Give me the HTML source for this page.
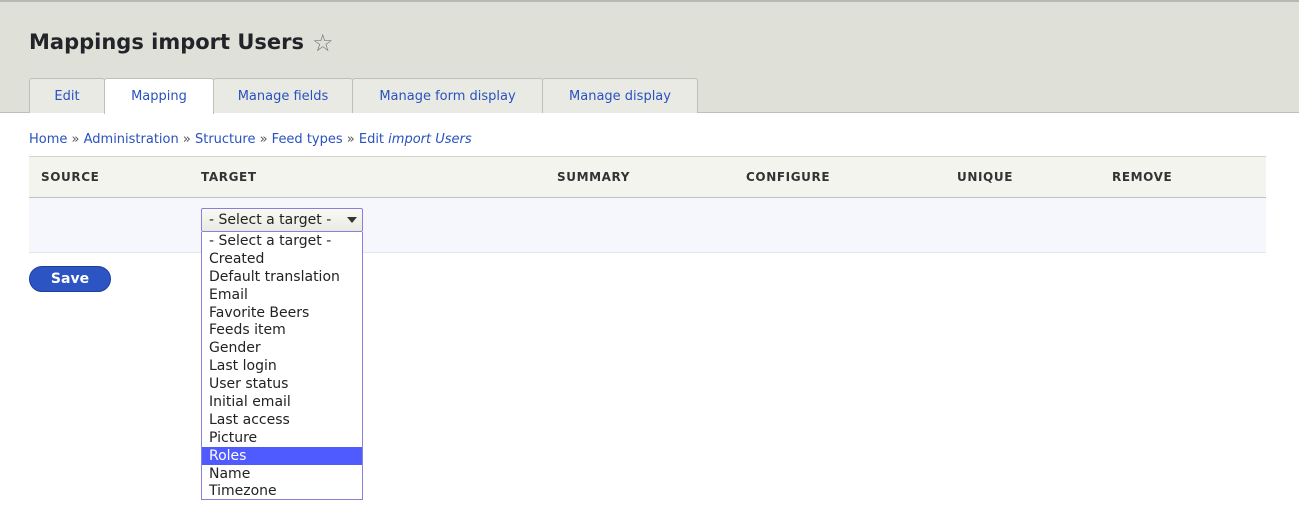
<!DOCTYPE html>
<html><head><style>
body{margin:0;width:1299px;height:511px;overflow:hidden;background:#fff;font-family:"DejaVu Sans","Liberation Sans",sans-serif;color:#222330;position:relative}
.hdr{position:absolute;left:0;top:0;width:1299px;height:113px;background:#dfe1d8;border-top:2px solid #b8b9b3;box-sizing:border-box;border-bottom:1px solid #bfc0ba}
h1{position:absolute;left:29px;top:30px;margin:0;font-size:21px;font-weight:bold;color:#232429}
.star{position:absolute;left:312px;top:29px;font-size:24px;color:#777}
.tab{position:absolute;top:78px;height:35px;box-sizing:border-box;border:1px solid #bfc0ba;border-bottom:none;background:#e9eae4;color:#2a52be;font-size:13px;text-align:center;line-height:35px;border-radius:3px 3px 0 0}
.tab.a{background:#fff;height:36px}
a{color:#2a52be;text-decoration:none}
.bc{position:absolute;left:29px;top:132px;font-size:13px;color:#555}
.th{position:absolute;left:29px;top:156px;width:1237px;height:42px;background:#f3f4ee;border-top:1px solid #d4d4d0;border-bottom:1px solid #c0c1bd;box-sizing:border-box}
.th span{position:absolute;top:13px;font-size:12px;font-weight:bold;letter-spacing:.6px;color:#333}
.row{position:absolute;left:29px;top:198px;width:1237px;height:55px;background:#f5f7fd;border-bottom:1px solid #e5e5e3;box-sizing:border-box}
.sel{position:absolute;left:201px;top:208px;width:162px;height:24px;box-sizing:border-box;border:1px solid #8a7fdb;border-radius:2px;background:linear-gradient(#fafaf6,#e9eadf);font-size:14px;line-height:23px;padding-left:7px;color:#222}
.sel i{position:absolute;right:5px;top:8px;border:5px solid transparent;border-top:6px solid #333;border-bottom:none}
.list{position:absolute;left:201px;top:232px;width:162px;height:268px;box-sizing:border-box;border:1px solid #8a7fdb;border-top:none;background:#fff;font-size:14px;padding-top:0}
.list div{height:17.9px;line-height:19px;padding-left:7px;color:#222}
.list .h{background:#4f5bff;color:#fff}
.save{position:absolute;left:29px;top:266px;width:82px;height:26px;box-sizing:border-box;background:#2c55c3;border:1px solid #1e3e9c;border-radius:14px;color:#fff;font-weight:bold;font-size:14px;text-align:center;line-height:25px}
</style></head><body>
<div class="hdr"></div>
<h1>Mappings import Users</h1><div class="star">☆</div>
<div class="tab" style="left:29px;width:76px">Edit</div>
<div class="tab a" style="left:104px;width:110px">Mapping</div>
<div class="tab" style="left:213px;width:140px">Manage fields</div>
<div class="tab" style="left:352px;width:191px">Manage form display</div>
<div class="tab" style="left:542px;width:156px">Manage display</div>
<div class="bc"><a>Home</a> » <a>Administration</a> » <a>Structure</a> » <a>Feed types</a> » <a>Edit <i>import Users</i></a></div>
<div class="th"><span style="left:12px">SOURCE</span><span style="left:172px">TARGET</span><span style="left:528px">SUMMARY</span><span style="left:717px">CONFIGURE</span><span style="left:928px">UNIQUE</span><span style="left:1083px">REMOVE</span></div>
<div class="row"></div>
<div class="sel">- Select a target -<i></i></div>
<div class="list"><div>- Select a target -</div><div>Created</div><div>Default translation</div><div>Email</div><div>Favorite Beers</div><div>Feeds item</div><div>Gender</div><div>Last login</div><div>User status</div><div>Initial email</div><div>Last access</div><div>Picture</div><div class="h">Roles</div><div>Name</div><div>Timezone</div></div>
<div class="save">Save</div>
</body></html>
